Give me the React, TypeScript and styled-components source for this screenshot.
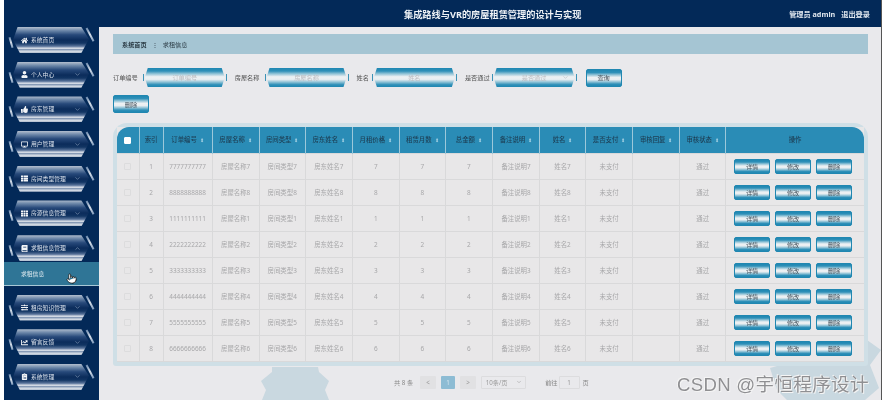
import React from 'react'
import styled, { createGlobalStyle } from 'styled-components'
import {
  FaHome,
  FaUser,
  FaThumbsUp,
  FaDesktop,
  FaThList,
  FaTh,
  FaBook,
  FaSlidersH,
  FaChartLine,
  FaClipboardList,
} from 'react-icons/fa'
import { ChevronDown, ChevronUp, Pointer } from 'lucide-react'

const FONT = `"Noto Sans", "Noto Sans CJK SC", sans-serif`

const GlobalStyle = createGlobalStyle`
  html, body {
    margin: 0;
    padding: 0;
    background: #fff;
    overflow: hidden;
  }
  * { box-sizing: border-box; }
`

const Frame = styled.div`
  position: relative;
  width: 884px;
  height: 400px;
  padding: 0 2px 0 4px;
  overflow: hidden;
  font-family: ${FONT};
  filter: blur(0.45px);
`

const Screen = styled.div`
  display: flex;
  flex-direction: column;
  height: 100%;
  border-right: 1px solid #555;
`

const Header = styled.header`
  display: flex;
  align-items: center;
  flex: 0 0 27px;
  height: 27px;
  padding: 0 11px 0 400px;
  background: #032958;
  color: #fff;
`

const Title = styled.h1`
  margin: 0;
  flex: 1;
  font-size: 9.2px;
  font-weight: 700;
  color: #eef2f6;
`

const UserInfo = styled.div`
  display: flex;
  gap: 6px;
  font-size: 7.2px;
  font-weight: 700;
  color: #dfe6ee;
`

const Body = styled.div`
  display: flex;
  flex: 1;
  min-height: 0;
`

const Sidebar = styled.nav`
  display: flex;
  flex-direction: column;
  flex: 0 0 95px;
  gap: 8.7px;
  background: #032958;
`

const MenuRow = styled.div`
  position: relative;
  display: flex;
  align-items: center;
  flex: 0 0 26px;
  width: 76px;
  height: 26px;
  margin-left: 9px;

  &::before,
  &::after {
    content: '';
    position: absolute;
    width: 2.4px;
    background: linear-gradient(#6f8cb0, #d4dde8 50%, #7f9abb);
  }
  &::before {
    left: -3px;
    top: 10px;
    height: 11px;
    transform: rotate(-16deg);
  }
  &::after {
    right: -2px;
    top: 0;
    height: 15px;
    transform: rotate(-28deg);
  }
`

const MenuFace = styled.div`
  display: flex;
  align-items: center;
  width: 100%;
  height: 100%;
  padding: 0 8px 0 8px;
  gap: 3px;
  clip-path: polygon(6% 0, 90% 0, 100% 46%, 90% 100%, 9% 100%, 0 50%);
  background: linear-gradient(
    #b3bfcf 0,
    #6b86a8 14%,
    #27497a 30%,
    #0b2c5b 50%,
    #123563 62%,
    #59739a 74%,
    #dfe4ec 82%,
    #7d92b0 87%,
    #d7dee7 93%,
    #aebbcd 100%
  );
  color: #f3f5f8;
  font-size: 5.8px;
  white-space: nowrap;

  svg {
    flex: none;
  }
`

const MenuLabel = styled.span`
  flex: 1;
  padding-bottom: 1px;
  color: #dbe2ec;
`

const SubMenu = styled.div`
  position: relative;
  display: flex;
  align-items: center;
  flex: 0 0 24px;
  margin-top: -8px;
  padding-left: 17px;
  background: #2f7596;
  border-bottom: 1px solid #a8c8d6;
  color: #dce8ee;
  font-size: 5.8px;
`

const Cursor = styled.span`
  position: absolute;
  left: 62px;
  top: 11px;
  display: flex;
  color: #111;
`

const Main = styled.main`
  position: relative;
  flex: 1;
  min-width: 0;
  padding: 7px 13px 0 14px;
  background: #e9e9ec;
`

const Gears = styled.svg`
  position: absolute;
  left: 0;
  top: 0;
  width: 782px;
  height: 373px;
`

const Content = styled.div`
  position: relative;
  display: flex;
  flex-direction: column;
`

const Breadcrumb = styled.div`
  display: flex;
  align-items: center;
  gap: 5px;
  height: 20px;
  padding-left: 9px;
  background: #a5c5d3;
  color: #2c3c46;
  font-size: 6.2px;
`

const Crumb = styled.span<{ $strong?: boolean }>`
  font-weight: ${(p) => (p.$strong ? 700 : 400)};
`

const FilterBar = styled.div`
  display: flex;
  align-items: center;
  gap: 10px;
  height: 19px;
  margin-top: 14px;
`

const Field = styled.label<{ $gap?: number }>`
  display: flex;
  align-items: center;
  gap: ${(p) => p.$gap ?? 7}px;
  font-size: 6.2px;
  color: #555;
  white-space: nowrap;
`

const PillWrap = styled.span<{ $width: number }>`
  position: relative;
  display: block;
  width: ${(p) => p.$width}px;
  height: 19px;

  &::before,
  &::after {
    content: '';
    position: absolute;
    top: 6px;
    width: 1px;
    height: 7px;
    background: #3d93b6;
  }
  &::before {
    left: -2px;
  }
  &::after {
    right: -2px;
  }
`

const PILL_GRADIENT = `linear-gradient(
  #1f87b2 0,
  #2f90b8 16%,
  #8fc2d6 30%,
  #eef1f3 46%,
  #e9eef1 60%,
  #8fc2d6 74%,
  #2f90b8 88%,
  #1f87b2 100%
)`

const Pill = styled.input`
  display: block;
  width: 100%;
  height: 100%;
  border: 0;
  outline: 0;
  padding: 0;
  clip-path: polygon(3px 0, calc(100% - 3px) 0, 100% 50%, calc(100% - 3px) 100%, 3px 100%, 0 50%);
  background: ${PILL_GRADIENT};
  font-family: inherit;
  font-size: 6.2px;
  text-align: center;

  &::placeholder {
    color: #bdbdc2;
  }
`

const PillChevron = styled.span`
  position: absolute;
  right: 6px;
  top: 6px;
  display: flex;
  color: #b5bbc2;
`

const GlossyButton = styled.button<{ $w?: number; $h?: number }>`
  flex: none;
  width: ${(p) => p.$w ?? 36}px;
  height: ${(p) => p.$h ?? 18}px;
  padding: 0;
  border: 1px solid #2087b1;
  border-radius: 2px;
  background: ${PILL_GRADIENT};
  color: #46535d;
  font-family: inherit;
  font-size: 6.2px;
`

const QueryButton = styled(GlossyButton)`
  margin-left: 1px;
`

const Actions = styled.div`
  display: flex;
  margin-top: 8px;
`

const TableShell = styled.div`
  margin-top: 10px;
  padding: 4px;
  border-radius: 14px 14px 3px 3px;
  background: #cfdfe6;
`

const Table = styled.table`
  width: 747px;
  border-collapse: collapse;
  table-layout: fixed;
  font-size: 6.4px;
  background: #e8e7e8;
`

const HeadRow = styled.tr`
  height: 26px;
  background: #2a8cb6;
`

const Th = styled.th`
  padding: 0;
  border-right: 1px solid #9cc8da;
  color: #1d3f55;
  font-weight: 500;
  white-space: nowrap;

  &:first-child {
    border-top-left-radius: 12px;
  }
  &:last-child {
    border-right: 0;
    border-top-right-radius: 12px;
  }
`

const SortMark = styled.span`
  display: inline-block;
  margin-left: 3px;
  color: #a9d3e4;
  font-size: 5px;
  vertical-align: 0.5px;
`

const Td = styled.td`
  height: 26px;
  padding: 0;
  border: 1px solid #d9d9da;
  border-left: 0;
  color: #a7a7a9;
  text-align: center;
  white-space: nowrap;

  &:last-child {
    border-right: 0;
  }
`

const Check = styled.span<{ $head?: boolean }>`
  display: inline-block;
  width: 7px;
  height: 7px;
  vertical-align: middle;
  border: 1px solid ${(p) => (p.$head ? '#fff' : '#dcdcdd')};
  border-radius: 1px;
  background: ${(p) => (p.$head ? '#fff' : 'transparent')};
`

const RowActions = styled.div`
  display: flex;
  justify-content: center;
  gap: 5px;
  padding-right: 4px;
`

const Pager = styled.div`
  display: flex;
  align-items: center;
  height: 13px;
  margin-top: 10px;
  padding-left: 281px;
  font-size: 6.2px;
  color: #888;
`

const PagerBox = styled.span<{ $w: number; $active?: boolean; $outlined?: boolean; $gap?: number }>`
  display: flex;
  align-items: center;
  justify-content: center;
  gap: 8px;
  flex: none;
  width: ${(p) => p.$w}px;
  height: 13px;
  margin-left: ${(p) => p.$gap ?? 5}px;
  border-radius: 1px;
  border: ${(p) => (p.$outlined ? '1px solid #dcdcde' : '0')};
  background: ${(p) => (p.$active ? '#8dbcd4' : p.$outlined ? 'transparent' : '#e1e1e3')};
  color: ${(p) => (p.$active ? '#d5e6ee' : '#999')};
`

const PagerText = styled.span<{ $gap?: number }>`
  margin-left: ${(p) => p.$gap ?? 0}px;
`

const Watermark = styled.div`
  position: absolute;
  left: 677px;
  top: 369px;
  font-family: "Liberation Sans", "Noto Sans CJK SC", sans-serif;
  font-size: 18.6px;
  color: #8f8f92;
  letter-spacing: 0.3px;
  white-space: nowrap;
  text-shadow: 0 0 1px #fff, 1px 1px 0 #f4f4f4, -1px -1px 0 #f4f4f4;
`

const menus = [
  { icon: <FaHome size={7} />, label: '系统首页' },
  { icon: <FaUser size={7} />, label: '个人中心', more: true },
  { icon: <FaThumbsUp size={7} />, label: '房东管理', more: true },
  { icon: <FaDesktop size={7} />, label: '用户管理', more: true },
  { icon: <FaThList size={7} />, label: '房间类型管理', more: true },
  { icon: <FaTh size={7} />, label: '房源信息管理', more: true },
  { icon: <FaBook size={7} />, label: '求租信息管理', open: true },
  { icon: <FaSlidersH size={7} />, label: '租房知识管理', more: true },
  { icon: <FaChartLine size={7} />, label: '留言反馈', more: true },
  { icon: <FaClipboardList size={7} />, label: '系统管理', more: true },
]

const columns = [22, 24, 49, 47, 46, 47, 47, 46, 47, 47, 46, 47, 47, 46, 138]
const heads = ['订单编号', '房屋名称', '房间类型', '房东姓名', '月租价格', '租赁月数', '总金额', '备注说明', '姓名', '是否支付', '审核回复', '审核状态']
const rows = [7, 8, 1, 2, 3, 4, 5, 6]

export default function App() {
  return (
    <Frame>
      <GlobalStyle />
      <Screen>
        <Header>
          <Title>集成路线与VR的房屋租赁管理的设计与实现</Title>
          <UserInfo>
            <span>管理员 admin</span>
            <span>退出登录</span>
          </UserInfo>
        </Header>
        <Body>
          <Sidebar>
            {menus.map((m) => (
              <React.Fragment key={m.label}>
                <MenuRow>
                  <MenuFace>
                    {m.icon}
                    <MenuLabel>{m.label}</MenuLabel>
                    {m.more && <ChevronDown size={7} color="#8fa3bd" />}
                    {m.open && <ChevronUp size={7} color="#8fa3bd" />}
                  </MenuFace>
                </MenuRow>
                {m.open && (
                  <SubMenu>
                    求租信息
                    <Cursor>
                      <Pointer size={11} fill="#fff" strokeWidth={1.6} />
                    </Cursor>
                  </SubMenu>
                )}
              </React.Fragment>
            ))}
          </Sidebar>
          <Main>
            <Gears viewBox="0 0 782 373" aria-hidden="true">
              <polygon
                fill="#c9d8e0"
                points="173,340 219,340 220,345 230,354 226,363 230,373 163,373 167,363 162,354 173,345"
              />
              <polygon
                fill="#c9d8e0"
                points="671,341 768,313 782,323 771,338 780,361 766,373 688,373 678,363"
              />
            </Gears>
            <Content>
              <Breadcrumb>
                <Crumb $strong>系统首页</Crumb>
                <Crumb>⋮</Crumb>
                <Crumb>求租信息</Crumb>
              </Breadcrumb>
              <FilterBar>
                <Field>
                  订单编号
                  <PillWrap $width={80}>
                    <Pill placeholder="订单编号" />
                  </PillWrap>
                </Field>
                <Field>
                  房屋名称
                  <PillWrap $width={80}>
                    <Pill placeholder="房屋名称" />
                  </PillWrap>
                </Field>
                <Field $gap={5}>
                  姓名
                  <PillWrap $width={81}>
                    <Pill placeholder="姓名" />
                  </PillWrap>
                </Field>
                <Field $gap={4}>
                  是否通过
                  <PillWrap $width={81}>
                    <Pill placeholder="是否通过" />
                    <PillChevron>
                      <ChevronDown size={7} />
                    </PillChevron>
                  </PillWrap>
                </Field>
                <QueryButton>查询</QueryButton>
              </FilterBar>
              <Actions>
                <GlossyButton>删除</GlossyButton>
              </Actions>
              <TableShell>
                <Table>
                  <colgroup>
                    {columns.map((w, i) => (
                      <col key={i} width={w} />
                    ))}
                  </colgroup>
                  <thead>
                    <HeadRow>
                      <Th>
                        <Check $head />
                      </Th>
                      <Th>索引</Th>
                      {heads.map((h) => (
                        <Th key={h}>
                          {h}
                          <SortMark>⬍</SortMark>
                        </Th>
                      ))}
                      <Th>操作</Th>
                    </HeadRow>
                  </thead>
                  <tbody>
                    {rows.map((n, i) => (
                      <tr key={n}>
                        <Td>
                          <Check />
                        </Td>
                        <Td>{i + 1}</Td>
                        <Td>{String(n).repeat(10)}</Td>
                        <Td>房屋名称{n}</Td>
                        <Td>房间类型{n}</Td>
                        <Td>房东姓名{n}</Td>
                        <Td>{n}</Td>
                        <Td>{n}</Td>
                        <Td>{n}</Td>
                        <Td>备注说明{n}</Td>
                        <Td>姓名{n}</Td>
                        <Td>未支付</Td>
                        <Td />
                        <Td>通过</Td>
                        <Td>
                          <RowActions>
                            <GlossyButton $h={15}>详情</GlossyButton>
                            <GlossyButton $h={15}>修改</GlossyButton>
                            <GlossyButton $h={15}>删除</GlossyButton>
                          </RowActions>
                        </Td>
                      </tr>
                    ))}
                  </tbody>
                </Table>
              </TableShell>
              <Pager>
                <PagerText>共 8 条</PagerText>
                <PagerBox $w={16} $gap={7}>&lt;</PagerBox>
                <PagerBox $w={14} $active>1</PagerBox>
                <PagerBox $w={16}>&gt;</PagerBox>
                <PagerBox $w={45} $outlined>
                  10条/页
                  <ChevronDown size={6} />
                </PagerBox>
                <PagerText $gap={19}>前往</PagerText>
                <PagerBox $w={21} $outlined $gap={1}>
                  1
                </PagerBox>
                <PagerText $gap={3}>页</PagerText>
              </Pager>
            </Content>
          </Main>
        </Body>
      </Screen>
      <Watermark>CSDN @宇恒程序设计</Watermark>
    </Frame>
  )
}
